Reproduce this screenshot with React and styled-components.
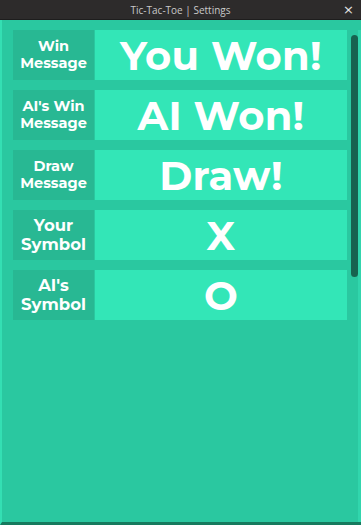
import React from 'react'
import styled, { createGlobalStyle } from 'styled-components'

const settings = [
	{ label: ['Win', 'Message'], value: 'You Won!' },
	{ label: ["AI's Win", 'Message'], value: 'AI Won!' },
	{ label: ['Draw', 'Message'], value: 'Draw!' },
	{ label: ['Your', 'Symbol'], value: 'X', big: true },
	{ label: ["AI's", 'Symbol'], value: 'O', big: true },
]

const App = () => {
	return (
		<>
			<GlobalStyle />
			<Window>
				<TitleBar>
					<Title>Tic-Tac-Toe | Settings</Title>
					<Close>×</Close>
				</TitleBar>

				<Body>
					<List>
						{settings.map(({ label, value, big }) => (
							<Row key={value}>
								<Label $big={big}>
									{label[0]}
									<br />
									{label[1]}
								</Label>
								<Value>{value}</Value>
							</Row>
						))}
					</List>

					<Track>
						<Thumb />
					</Track>
				</Body>
			</Window>
		</>
	)
}

export default App


const GlobalStyle = createGlobalStyle`
	html, body {
		margin: 0;
		padding: 0;
		background: #2b2929;
	}
`

const Window = styled.div`
	display: flex;
	flex-direction: column;

	width: 361px;
	height: 525px;

	font-family: 'Montserrat', 'Inter', 'DejaVu Sans', sans-serif;
`

const TitleBar = styled.div`
	position: relative;

	display: flex;
	justify-content: center;
	align-items: center;

	height: 20px;
	flex-shrink: 0;

	background-color: #2d2b2b;
	border-bottom: 1px solid #1e1d1d;
	box-sizing: border-box;
`

const Title = styled.span`
	color: #c9c9c9;
	font-family: 'Open Sans', sans-serif;
	font-size: 10px;
`

const Close = styled.span`
	position: absolute;
	right: 7px;
	top: 1px;

	color: #e6e6e6;
	font-family: 'DejaVu Sans', sans-serif;
	font-size: 13px;
	line-height: 18px;
`

const Body = styled.div`
	flex: 1;

	display: flex;
	gap: 4px;

	padding: 10px 0 0 11px;

	background-color: #2ac8a0;
	border-left: 2px solid #34dfb3;
	border-bottom: 3px solid #167a5e;
	box-sizing: border-box;
`

const List = styled.div`
	flex: 1;

	display: flex;
	flex-direction: column;
	gap: 10px;
`

const Row = styled.div`
	display: flex;
	gap: 1px;

	height: 50px;
`

const Label = styled.div`
	display: flex;
	justify-content: center;
	align-items: center;

	width: 81px;
	flex-shrink: 0;

	background-color: #28b893;

	color: #ffffff;
	font-size: ${({ $big }) => ($big ? '16.5px' : '14.5px')};
	font-weight: 700;
	line-height: ${({ $big }) => ($big ? '19px' : '17px')};
	text-align: center;
`

const Value = styled.div`
	flex: 1;

	display: flex;
	justify-content: center;
	align-items: center;

	background-color: #33e6b7;

	color: #ffffff;
	font-size: 40px;
	font-weight: 700;
	letter-spacing: 0.3px;
`

const Track = styled.div`
	width: 7px;
	padding-top: 5px;
	border-right: 3px solid #31d6ad;
`

const Thumb = styled.div`
	height: 242px;

	background-color: #17634f;
	border-radius: 4px;
`
